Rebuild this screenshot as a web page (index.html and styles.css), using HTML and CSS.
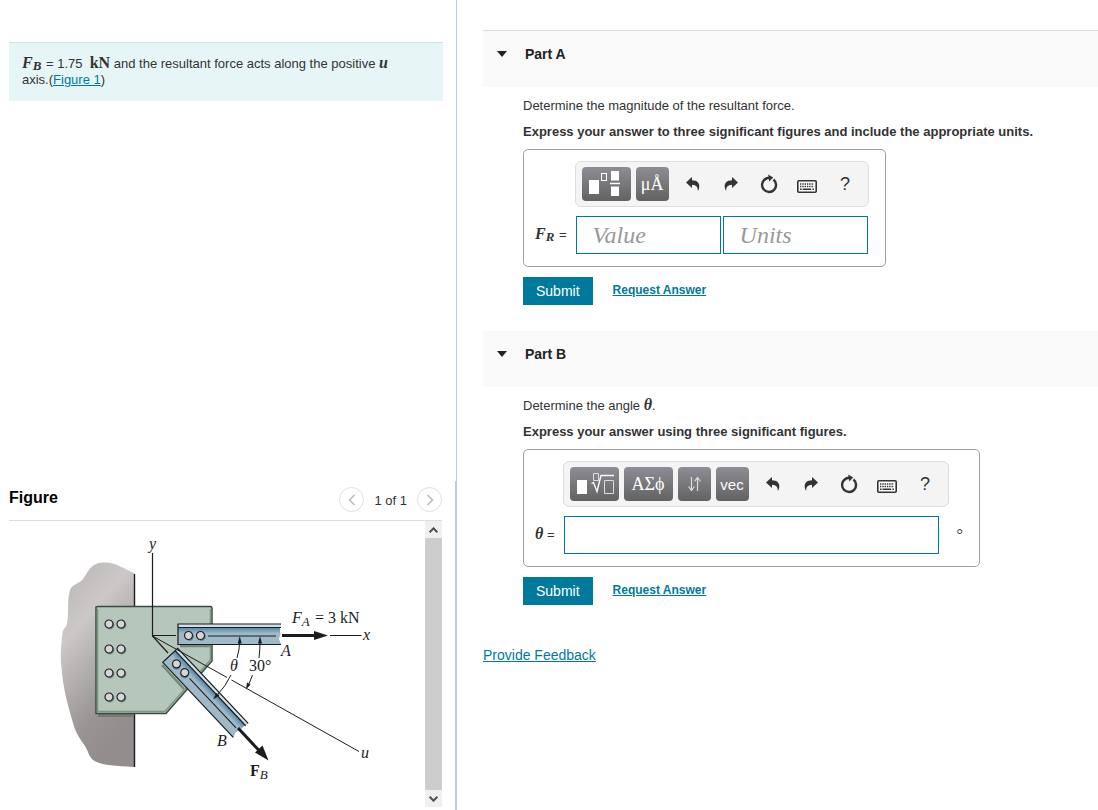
FILE: index.html
```html
<!DOCTYPE html>
<html lang="en">
<head>
    <meta charset="UTF-8">
    <meta name="viewport" content="width=device-width, initial-scale=1.0">
    <title>Resultant Force</title>
    <link rel="stylesheet" href="styles.css">
</head>
<body>

    <!-- Shared toolbar icons -->
    <svg class="icon-defs" aria-hidden="true">
        <symbol id="icon-undo" viewBox="0 0 16 16">
            <path d="M1 6.5 L7 1 V4.2 C12 4.2 15 7 14.2 11.5 C14 13 13.5 14.2 12.8 15 C13 11.5 11.5 9 7 8.8 V12 Z" fill="#333"/>
        </symbol>
        <symbol id="icon-redo" viewBox="0 0 16 16">
            <path d="M15 6.5 L9 1 V4.2 C4 4.2 1 7 1.8 11.5 C2 13 2.5 14.2 3.2 15 C3 11.5 4.5 9 9 8.8 V12 Z" fill="#333"/>
        </symbol>
        <symbol id="icon-reset" viewBox="0 0 18 20">
            <path d="M5 5.3 A7 7 0 1 0 13.4 5.5" fill="none" stroke="#333" stroke-width="2.4"/>
            <path d="M4.2 5.8 C6 4.2 7.6 3.8 9.4 3.8" fill="none" stroke="#333" stroke-width="2.4"/>
            <path d="M8.2 0.4 L13.2 3.6 L9.2 7.6 Z" fill="#333"/>
        </symbol>
        <symbol id="icon-keyboard" viewBox="0 0 20 13">
            <rect x="0.8" y="0.8" width="18.4" height="11.4" rx="1" fill="#fff" stroke="#333" stroke-width="1.6"/>
            <path d="M3 4H17M3 6.5H17" stroke="#333" stroke-width="1.4" stroke-dasharray="1.4 0.9"/>
            <path d="M3 9.2H4.6M5.6 9.2H14.2M15.4 9.2H17" stroke="#333" stroke-width="1.4"/>
        </symbol>
    </svg>

    <div class="page">

        <!-- Problem and figure -->
        <div class="left">
            <div class="problem">
                <p><i class="math">F<sub>B</sub></i> = 1.75 &nbsp;<span class="math">kN</span> and the resultant force acts along the positive <i class="math">u</i><br>axis.(<a href="#figure">Figure 1</a>)</p>
            </div>

            <div class="figure" id="figure">
                <div class="figure-head">
                    <h2>Figure</h2>
                    <div class="pager">
                        <button class="page-btn" aria-label="Previous figure">
                            <svg width="10" height="14" viewBox="0 0 10 14"><path d="M7.500 2 L2.500 7 L7.500 12" fill="none" stroke="#bbb" stroke-width="1.600"/></svg>
                        </button>
                        <span>1 of 1</span>
                        <button class="page-btn" aria-label="Next figure">
                            <svg width="10" height="14" viewBox="0 0 10 14"><path d="M2.500 2 L7.500 7 L2.500 12" fill="none" stroke="#bbb" stroke-width="1.600"/></svg>
                        </button>
                    </div>
                </div>

                <div class="figure-view">
                    <svg class="diagram" width="416" height="286" viewBox="9 521 416 286">
                        <defs>
                            <linearGradient id="wall" x1="0" y1="0" x2="0.4" y2="1">
                                <stop offset="0" stop-color="#b9b3b3"/>
                                <stop offset="0.35" stop-color="#ccc8c8"/>
                                <stop offset="0.8" stop-color="#9a9494"/>
                                <stop offset="1" stop-color="#938d8d"/>
                            </linearGradient>
                            <linearGradient id="flange" x1="0" y1="0" x2="0" y2="1">
                                <stop offset="0" stop-color="#4f86a8"/>
                                <stop offset="1" stop-color="#9fb9c8"/>
                            </linearGradient>
                            <g id="bolt">
                                <circle cx="1" cy="1" r="4.4" fill="#4d5f60" opacity="0.6"/>
                                <circle r="4" fill="#d4d6da" stroke="#222" stroke-width="1.2"/>
                            </g>
                            <g id="beam">
                                <path d="M0 0 H103 L101.500 5 L102.500 10 L101 15 L103 20.500 H0 Z" fill="#9fb9c8"/>
                                <rect x="0" y="0" width="102" height="3.500" fill="#d3dfe8"/>
                                <rect x="0" y="3.500" width="102" height="6" fill="url(#flange)"/>
                                <path d="M103 0 H0 V20.500 H103 M0 3.500 H103" fill="none" stroke="#1c1c1c" stroke-width="1.200"/>
                                <path d="M30 12 H98" stroke="#1c1c1c"/>
                                <use href="#bolt" x="10.500" y="11.500"/>
                                <use href="#bolt" x="22.500" y="11.500"/>
                            </g>
                        </defs>

                        <!-- wall -->
                        <path d="M134 573 C122 568 116 562 103 562.500 C90 563 88 573 83 579 C79 584 72 584 70 590 C67 600 69 612 67 624 C66 628 63 628 62.500 634 C61 645 60 657 61.500 668 C63 688 68 706 73 723 C77 738 84 742 88 752 C92 765 104 765 134 767 Z" fill="url(#wall)"/>
                        <path d="M134.500 574 V767" stroke="#1c1c1c" stroke-width="1.400"/>

                        <!-- plate -->
                        <rect x="98" y="713" width="36" height="4" fill="#757a7d"/>
                        <path d="M97.500 606.500 H211 L212 608 V661 L166 713.500 H96 V607 Z" fill="#b5c6ba" stroke="#3a4c42" stroke-width="1.500"/>
                        <path d="M97.500 609 V711.500 H165 L210.500 660 V609" fill="none" stroke="#7b9784" stroke-width="1.500"/>
                        <g>
                            <use href="#bolt" x="109" y="624"/><use href="#bolt" x="121" y="624"/>
                            <use href="#bolt" x="109" y="649"/><use href="#bolt" x="121" y="649"/>
                            <use href="#bolt" x="109" y="673"/><use href="#bolt" x="121" y="673"/>
                            <use href="#bolt" x="109" y="697"/><use href="#bolt" x="121" y="697"/>
                        </g>
                        <path d="M180 646 H211" stroke="#6f8c7a" stroke-width="2.500"/>
                        <path d="M162 665 L184 689" stroke="#6f8c7a" stroke-width="2.500"/>

                        <!-- members -->
                        <use href="#beam" x="178" y="624"/>
                        <use href="#beam" transform="translate(177.700 648.300) rotate(46.800)"/>

                        <!-- axes -->
                        <path d="M152.500 553 V636 L168 653 M152.500 635.500 H176 M330 635.500 H361.500" fill="none" stroke="#1c1c1c" stroke-width="1.200"/>
                        <path d="M152.500 636 L227 677.500 M231.500 680 L359 751.500" stroke="#1c1c1c"/>

                        <!-- forces -->
                        <path d="M282 635.500 H316" stroke="#1c1c1c" stroke-width="3"/>
                        <path d="M328 635.500 L314 631 V640 Z" fill="#1c1c1c"/>
                        <path d="M238 728 L260 751.500" stroke="#1c1c1c" stroke-width="3"/>
                        <path d="M268.500 760.500 L255 752.500 L262.500 745.500 Z" fill="#1c1c1c"/>

                        <!-- angles -->
                        <path d="M239.700 641 Q239.500 650 237 658 M231 675 Q226 686 216 696.500 M260 641 Q260 650 259 658 M252.500 675 L248.500 685" fill="none" stroke="#1c1c1c"/>
                        <path d="M239.700 636 L237.700 643.500 H241.700 Z M260 636 L258 643.500 H262 Z M213 699.500 L216.500 693 L219.500 695.500 Z M246 689.500 L247 682.500 L250.500 684.500 Z" fill="#1c1c1c"/>

                        <g class="diagram-text">
                            <text x="149" y="549" class="var">y</text>
                            <text x="363" y="640" class="var">x</text>
                            <text x="361" y="758" class="var">u</text>
                            <text x="281" y="656" class="var">A</text>
                            <text x="217" y="746" class="var">B</text>
                            <text x="230" y="671" class="var">θ</text>
                            <text x="249" y="671">30°</text>
                            <text x="292" y="623"><tspan class="var">F</tspan><tspan class="var small" dy="3">A</tspan></text>
                            <text x="315" y="623">= 3 kN</text>
                            <text x="250" y="776"><tspan class="vector">F</tspan><tspan class="var small" dy="3">B</tspan></text>
                        </g>
                    </svg>

                    <div class="scrollbar">
                        <button aria-label="Scroll up">
                            <svg width="9" height="6" viewBox="0 0 9 6"><path d="M0.700 5.300 L4.500 1.300 L8.300 5.300" fill="none" stroke="#505050" stroke-width="2"/></svg>
                        </button>
                        <div class="thumb"></div>
                        <button aria-label="Scroll down">
                            <svg width="9" height="6" viewBox="0 0 9 6"><path d="M0.700 0.700 L4.500 4.700 L8.300 0.700" fill="none" stroke="#505050" stroke-width="2"/></svg>
                        </button>
                    </div>
                </div>
            </div>
        </div>

        <!-- Questions -->
        <div class="right">
            <div class="part first">
                <div class="part-head">
                    <span class="arrow"></span>
                    <h2>Part A</h2>
                </div>
                <div class="part-body">
                    <p>Determine the magnitude of the resultant force.</p>
                    <p class="instructions">Express your answer to three significant figures and include the appropriate units.</p>
                    <div class="answer">
                        <div class="toolbar">
                            <button class="tool wide" aria-label="Templates">
                                <svg width="49" height="34" viewBox="0 0 49 34">
                                    <path d="M7 13H17V27H7Z M29 4H37V13.500H29Z M29 19.500H37V29H29Z M28 15.700H38V17.300H28Z" fill="#fff"/>
                                    <rect x="19.500" y="6.500" width="5" height="7" fill="none" stroke="#fff"/>
                                </svg>
                            </button>
                            <button class="tool serif">μÅ</button>
                            <div class="icons">
                                <button aria-label="Undo"><svg width="16" height="16"><use href="#icon-undo"/></svg></button>
                                <button aria-label="Redo"><svg width="16" height="16"><use href="#icon-redo"/></svg></button>
                                <button aria-label="Reset"><svg width="18" height="20"><use href="#icon-reset"/></svg></button>
                                <button class="keys" aria-label="Keyboard shortcuts"><svg width="20" height="13"><use href="#icon-keyboard"/></svg></button>
                                <button aria-label="Help">?</button>
                            </div>
                        </div>
                        <label for="value"><i class="math">F<sub>R</sub></i> =</label>
                        <div class="inputs">
                            <input type="text" id="value" placeholder="Value">
                            <input type="text" id="units" placeholder="Units" aria-label="Units">
                        </div>
                    </div>
                    <div class="actions">
                        <button class="submit">Submit</button>
                        <a href="#">Request Answer</a>
                    </div>
                </div>
            </div>

            <div class="part">
                <div class="part-head">
                    <span class="arrow"></span>
                    <h2>Part B</h2>
                </div>
                <div class="part-body">
                    <p>Determine the angle <i class="math">θ</i>.</p>
                    <p class="instructions">Express your answer using three significant figures.</p>
                    <div class="answer">
                        <div class="toolbar">
                            <button class="tool wide" aria-label="Templates">
                                <svg width="49" height="34" viewBox="0 0 49 34">
                                    <rect x="7" y="13" width="10" height="14" fill="#fff"/>
                                    <path d="M21.500 16.500 L23.500 15.500 L27 24.500 L31 8.500 H44" fill="none" stroke="#fff" stroke-width="1.300"/>
                                    <path d="M23.500 6.500H28.500V13.500H23.500Z M34.500 13.500H43.500V26.500H34.500Z" fill="none" stroke="#ddd"/>
                                </svg>
                            </button>
                            <button class="tool wide serif">ΑΣϕ</button>
                            <button class="tool" aria-label="Arrows">
                                <svg width="33" height="34" viewBox="0 0 33 34">
                                    <path d="M13.500 10V23M10.500 19.500L13.500 23.500L16.500 19.500M19.500 24V11M16.500 14.500L19.500 10.500L22.500 14.500" fill="none" stroke="#ddd" stroke-width="1.200"/>
                                </svg>
                            </button>
                            <button class="tool">vec</button>
                            <div class="icons">
                                <button aria-label="Undo"><svg width="16" height="16"><use href="#icon-undo"/></svg></button>
                                <button aria-label="Redo"><svg width="16" height="16"><use href="#icon-redo"/></svg></button>
                                <button aria-label="Reset"><svg width="18" height="20"><use href="#icon-reset"/></svg></button>
                                <button class="keys" aria-label="Keyboard shortcuts"><svg width="20" height="13"><use href="#icon-keyboard"/></svg></button>
                                <button aria-label="Help">?</button>
                            </div>
                        </div>
                        <label for="theta"><i class="math">θ</i> =</label>
                        <div class="inputs single">
                            <input type="text" id="theta">
                        </div>
                        <span class="degree">°</span>
                    </div>
                    <div class="actions">
                        <button class="submit">Submit</button>
                        <a href="#">Request Answer</a>
                    </div>
                </div>
            </div>

            <a class="feedback" href="#">Provide Feedback</a>
        </div>
    </div>

</body>
</html>
```

FILE: styles.css
```css
* {
    box-sizing: border-box;
}
body {
    margin: 0;
    background-color: #ffffff;
    color: #333333;
    font-family: "Liberation Sans", Arial, sans-serif;
    font-size: 13px;
    line-height: 16px;
}
h2, p {
    margin: 0;
}
a {
    color: #007a9c;
}
button {
    font-family: inherit;
    padding: 0;
    border: none;
    cursor: pointer;
}
svg {
    display: block;
}
.icon-defs {
    display: none;
}
.page {
    display: grid;
    grid-template-columns: minmax(360px, 457px) 1fr;
    min-height: 100vh;
}
.math {
    font-family: "Liberation Serif", "Times New Roman", serif;
    font-size: 16px;
    font-weight: bold;
    line-height: 0;
}
.math sub {
    margin-right: 1px;
    font-size: 13px;
    vertical-align: -2px;
}

/* Left side */
.left {
    display: flex;
    flex-direction: column;
    justify-content: space-between;
    border-right: 1px solid #b8cde0;
}
.problem {
    margin: 42px 13px 20px 9px;
    padding: 13px;
    background-color: #e6f6f6;
    border-top: 1px solid #d6e0e0;
}
.figure {
    padding: 0 13px 3px 9px;
    border-right: 1px solid #b8cde0;
}
.figure-head {
    display: flex;
    justify-content: space-between;
    height: 40px;
    border-bottom: 1px solid #dddddd;
}
.figure-head h2 {
    color: #000000;
    font-size: 16px;
    line-height: 34px;
}
.pager {
    display: flex;
    gap: 10px;
    line-height: 40px;
}
.page-btn {
    display: flex;
    align-items: center;
    justify-content: center;
    width: 25px;
    height: 25px;
    margin-top: 6px;
    background-color: #ffffff;
    border: 1px solid #e0e0e0;
    border-radius: 50%;
}
.figure-view {
    display: flex;
    justify-content: space-between;
}
.diagram {
    flex: 0 1 416px;
    min-width: 0;
}
.diagram-text {
    font-family: "Liberation Serif", "Times New Roman", serif;
    font-size: 16px;
    fill: #1c1c1c;
}
.var {
    font-style: italic;
}
.small {
    font-size: 13px;
}
.vector {
    font-weight: bold;
}
.scrollbar {
    display: flex;
    flex-direction: column;
    width: 17px;
    background-color: #f0f0f0;
}
.scrollbar button {
    display: flex;
    align-items: center;
    justify-content: center;
    height: 17px;
    background-color: #f0f0f0;
}
.thumb {
    flex: 1;
    background-color: #cdcdcd;
}

/* Right side */
.right {
    padding: 30px 0 20px 26px;
}
.part {
    margin-bottom: 26px;
}
.part-head {
    display: flex;
    align-items: center;
    gap: 18px;
    height: 56px;
    padding: 0 14px 10px;
    background-color: #f9f9f9;
}
.first .part-head {
    height: 57px;
    border-top: 1px solid #dddddd;
}
.part-head h2 {
    color: #222222;
    font-size: 14px;
}
.arrow {
    border-left: 5px solid transparent;
    border-right: 5px solid transparent;
    border-top: 6px solid #222222;
}
.part-body {
    padding: 11px 20px 0 40px;
}
.instructions {
    margin: 10px 0 9px;
    font-weight: bold;
}
.answer {
    display: inline-grid;
    grid-template-columns: auto auto auto;
    align-items: center;
    row-gap: 9px;
    padding: 11px 16px 12px 11px;
    border: 1px solid #a0a0a0;
    border-radius: 5px;
    vertical-align: top;
}
.toolbar {
    grid-column: 2;
    display: flex;
    align-items: center;
    gap: 5px;
    height: 46px;
    padding: 0 6px;
    background-color: #f4f4f4;
    border: 1px solid #dddddd;
    border-radius: 6px;
}
.tool {
    display: flex;
    align-items: center;
    justify-content: center;
    width: 33px;
    height: 34px;
    color: #ffffff;
    font-size: 15px;
    background: linear-gradient(#8e8d95, #626262);
    border-radius: 4px;
}
.wide {
    width: 49px;
}
.serif {
    font-family: "Liberation Serif", "Times New Roman", serif;
    font-size: 18px;
}
.icons {
    display: flex;
    gap: 5px;
    margin-left: 3px;
}
.icons button {
    display: flex;
    align-items: center;
    justify-content: center;
    width: 33px;
    height: 34px;
    color: #333333;
    font-size: 18px;
    background: none;
}
.icons .keys {
    padding-top: 4px;
}
label {
    grid-column: 1;
    padding-right: 8px;
    white-space: nowrap;
}
.inputs {
    display: flex;
    gap: 2px;
    width: 0;
    min-width: 100%;
    padding: 0 1px;
}
.inputs input {
    flex: 1;
    min-width: 0;
    height: 38px;
    padding: 0 16px;
    border: 1px solid #007a9c;
    color: #333333;
    font-family: "Liberation Serif", "Times New Roman", serif;
    font-size: 24px;
}
.inputs input::placeholder {
    color: #999999;
    font-style: italic;
    opacity: 1;
}
.inputs.single {
    padding-right: 10px;
}
.degree {
    padding-left: 8px;
    font-family: "Liberation Serif", "Times New Roman", serif;
    font-size: 16px;
}
.actions {
    display: flex;
    align-items: center;
    gap: 20px;
    margin-top: 10px;
}
.actions a {
    padding-bottom: 2px;
    font-size: 12px;
    font-weight: bold;
}
.submit {
    height: 28px;
    padding: 0 13px;
    background-color: #007a9c;
    color: #ffffff;
    font-size: 14px;
}
.feedback {
    display: inline-block;
    margin-top: 16px;
    font-size: 14px;
}
```
